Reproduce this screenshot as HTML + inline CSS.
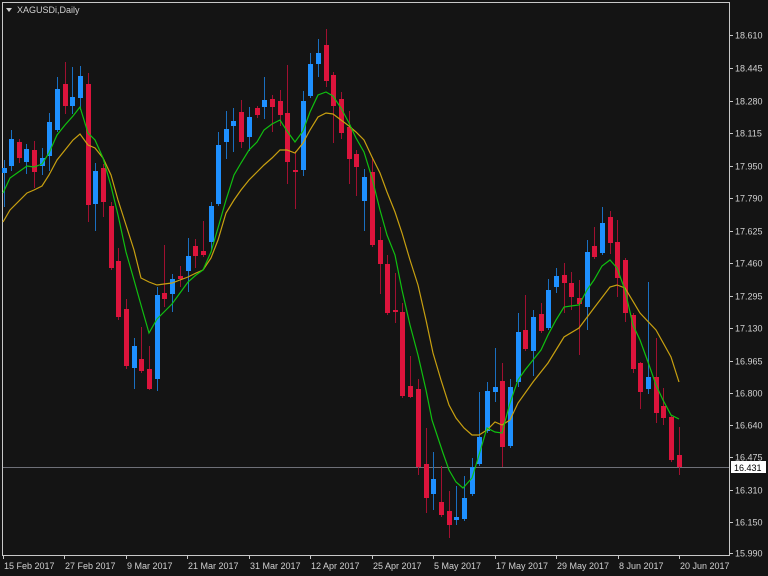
<!DOCTYPE html>
<html><head><meta charset="utf-8"><style>
html,body{margin:0;padding:0;background:#141414;}
svg{display:block;}
text{font-family:"Liberation Sans",sans-serif;font-size:9px;fill:#d0d0d0;}
</style></head><body>
<svg id="s" width="768" height="576" viewBox="0 0 768 576" xmlns="http://www.w3.org/2000/svg">
<rect width="768" height="576" fill="#141414"/>
<line x1="2.5" y1="2" x2="2.5" y2="556" stroke="#c8c8c8"/>
<line x1="2" y1="2.5" x2="730" y2="2.5" stroke="#c8c8c8"/>
<line x1="729.5" y1="2" x2="729.5" y2="556" stroke="#c8c8c8"/>
<line x1="2" y1="555.5" x2="730" y2="555.5" stroke="#c8c8c8"/>
<line x1="3" y1="467.5" x2="729" y2="467.5" stroke="#6e7078"/>
<g id="c"></g>
<polyline fill="none" stroke="#c8a010" stroke-width="1.2" points="3,222 10,210 27,193 34,190 42,186 49,175 57,160 65,150 73,140 80,134 88,145 95,148 103,158 111,175 118,200 126,225 134,250 141,278 149,282 157,285 164,284 172,283 180,280 188,277 196,273 203,270 211,258 218,240 226,213 234,200 241,190 249,180 257,172 264,165 272,158 280,150 287,150 295,153 303,143 310,130 318,117 326,113 333,114 341,120 349,126 356,132 364,140 372,157 380,173 387,192 395,212 402,233 410,260 418,285 426,320 433,353 441,380 449,405 456,418 464,428 472,435 479,435 487,430 495,422 502,425 510,420 518,403 533,382 548,363 564,337 579,328 594,308 610,287 617,285 625,288 640,313 656,330 671,357 679,382"/>
<polyline fill="none" stroke="#10c010" stroke-width="1.2" points="3,193 10,178 27,166 34,167 42,164 49,153 57,135 65,125 73,116 80,107 88,133 95,140 103,158 111,186 118,215 126,252 134,280 141,305 149,333 157,319 164,312 172,304 180,293 188,282 196,275 203,270 211,252 218,228 226,200 234,175 241,163 249,150 257,142 264,130 272,124 280,120 287,131 295,142 303,131 310,112 318,95 326,92 333,96 341,108 349,123 356,138 364,152 372,178 380,210 387,235 395,255 402,290 410,325 418,355 426,390 432,420 443,453 449,470 456,482 463,488 472,478 479,455 487,428 495,432 502,433 510,403 518,380 525,370 533,360 541,350 548,335 556,320 564,307 571,306 579,305 587,290 594,280 602,266 610,260 617,268 625,290 633,325 640,340 648,362 656,385 663,400 671,415 679,419"/>
<rect x="731" y="461" width="35" height="12" fill="#ffffff"/>
<text x="734" y="471" style="fill:#000">16.431</text>
<path d="M6 8 L12 8 L9 12 Z" fill="#d0d0d0"/>
<text x="17" y="13">XAGUSDi,Daily</text>
<g id="ax"></g>
</svg>
<script>
var C=[[3.5,168,173,160,207,1],[11,139,166,130,171,1],[19,142,158,139,163,0],[26,149,162,144,174,1],[34,150,172,141,188,0],[42,158,166,148,175,1],[49,122,156,113,171,1],[57,89,130,77,132,1],[65,84,106,62,114,0],[72,97,106,67,114,1],[80,76,98,66,110,1],[88,84,205,73,222,0],[95,171,204,163,231,1],[103,168,202,164,217,0],[111,206,268,202,270,0],[118,261,317,248,320,0],[126,309,366,299,369,0],[134,346,368,338,389,1],[141,359,371,327,373,0],[149,369,389,346,390,0],[157,295,379,287,391,1],[164,293,299,245,307,0],[172,279,294,274,312,1],[180,276,279,266,287,0],[188,256,271,238,292,1],[195,246,256,239,268,0],[203,251,255,221,257,0],[211,206,242,202,250,1],[218,145,204,132,206,1],[226,129,142,111,159,1],[233,121,126,108,152,1],[241,112,142,100,148,0],[249,117,137,107,151,1],[257,108,115,106,118,0],[264,100,107,77,119,1],[272,99,107,95,132,0],[280,101,115,90,126,0],[287,113,162,65,184,0],[295,170,172,151,209,0],[303,101,170,91,176,1],[310,64,96,53,98,1],[318,53,64,39,77,1],[326,45,81,29,87,0],[333,75,106,72,143,0],[341,99,133,92,139,0],[349,127,159,111,184,0],[356,154,167,150,196,0],[364,177,201,169,231,1],[372,172,245,157,247,0],[380,240,264,227,294,0],[387,264,313,255,315,0],[395,310,312,273,323,0],[402,312,396,303,398,0],[410,386,397,356,398,0],[418,389,467,379,475,0],[426,464,498,428,513,0],[433,479,494,452,510,1],[441,502,515,466,517,0],[449,511,525,491,538,0],[456,517,520,486,525,1],[464,498,519,476,521,1],[472,467,494,458,496,1],[479,437,464,392,466,1],[487,391,431,382,433,1],[495,387,392,348,402,1],[502,381,447,363,467,0],[510,387,446,379,448,1],[518,332,382,313,387,1],[525,330,349,295,351,0],[533,317,351,310,376,1],[541,314,331,303,333,0],[548,290,328,279,330,1],[556,276,287,268,293,1],[564,275,283,263,313,0],[571,283,297,272,310,0],[579,298,304,280,355,0],[587,252,307,240,330,1],[594,246,257,227,259,0],[602,223,253,207,255,1],[610,217,243,211,254,0],[617,242,278,220,297,0],[625,260,313,258,322,0],[633,315,369,313,373,0],[640,363,392,362,409,0],[648,377,389,282,394,1],[656,377,413,338,423,0],[663,406,418,388,425,0],[671,417,460,415,462,0],[679,455,467,427,475,0]];
var g=document.getElementById('c'),h='';
C.forEach(function(c){var col=c[5]?'#1e90ff':'#dc143c',wc=c[5]?'#1a6fc0':'#a01030';var x=Math.round(c[0]);
h+='<line x1="'+(x+.5)+'" y1="'+c[3]+'" x2="'+(x+.5)+'" y2="'+c[4]+'" stroke="'+wc+'"/>';
h+='<rect x="'+(x-2)+'" y="'+c[1]+'" width="5" height="'+Math.max(2,c[2]-c[1])+'" fill="'+col+'"/>';});
g.innerHTML=h;
var P=[["18.610",35],["18.445",68],["18.280",101],["18.115",133],["17.950",166],["17.790",198],["17.625",231],["17.460",263],["17.295",296],["17.130",328],["16.965",361],["16.800",393],["16.640",425],["16.475",457],["16.310",490],["16.150",522],["15.990",553]];
var D=[["15 Feb 2017",3],["27 Feb 2017",64],["9 Mar 2017",126],["21 Mar 2017",187],["31 Mar 2017",249],["12 Apr 2017",310],["25 Apr 2017",372],["5 May 2017",433],["17 May 2017",495],["29 May 2017",556],["8 Jun 2017",618],["20 Jun 2017",679]];
var a='';P.forEach(function(p){a+='<line x1="730" y1="'+(p[1]+.5)+'" x2="733" y2="'+(p[1]+.5)+'" stroke="#c8c8c8"/><text x="735" y="'+(p[1]+3.5)+'">'+p[0]+'</text>';});
D.forEach(function(d){a+='<line x1="'+(d[1]+.5)+'" y1="556" x2="'+(d[1]+.5)+'" y2="559" stroke="#c8c8c8"/><text x="'+(d[1]+1)+'" y="569">'+d[0]+'</text>';});
document.getElementById('ax').innerHTML=a;
</script>
</body></html>
